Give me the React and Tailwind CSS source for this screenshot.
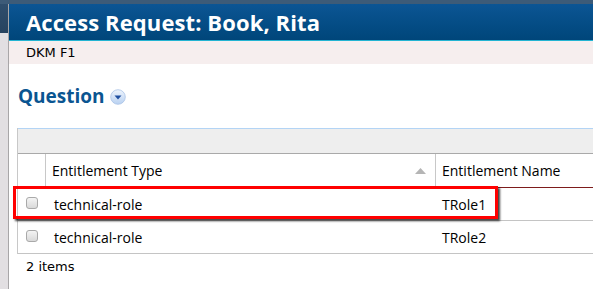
import React from "react";

function Checkbox() {
  return (
    <div className="h-[12px] w-[12px] rounded-[3px] border border-[#a9a9a9] bg-gradient-to-b from-[#f4f4f4] to-[#d9d9d9]" />
  );
}

export default function App() {
  const rows = [
    { type: "technical-role", name: "TRole1" },
    { type: "technical-role", name: "TRole2" },
  ];
  return (
    <div className="relative flex h-[289px] w-[593px] flex-col overflow-hidden bg-white">
      <div className="h-[4px] shrink-0 bg-[#3d5b78]" />
      <div className="flex flex-1">
        <div className="flex w-[9px] shrink-0 flex-col border-r border-[#a8a6a8]">
          <div className="h-[29px] bg-gradient-to-b from-[#2f4e6d] to-[#27435f]" />
          <div className="flex-1 bg-[#e2dfe2]" />
        </div>
        <div className="flex flex-1 flex-col">
          <div className="flex h-[36px] items-center bg-gradient-to-b from-[#0c5594] to-[#00467a] pl-[17px]">
            <span className="font-['Open_Sans',sans-serif] text-[22px] font-bold leading-none tracking-[0.1px] text-white">
              Access Request: Book, Rita
            </span>
          </div>
          <div className="h-[1px] bg-[#23b4d2]" />
          <div className="flex h-[23px] items-center bg-[#f6eeee] pl-[17px] font-['DejaVu_Sans',sans-serif] text-[13px] text-black">
            DKM F1
          </div>
          <div className="flex flex-1 flex-col pl-[8px]">
            <div className="flex h-[64px] items-start pt-[23px]">
              <div className="flex items-center gap-[6px] pl-[1px]">
                <span className="font-['Open_Sans',sans-serif] text-[19px] font-bold leading-none text-[#0a5591]">
                  Question
                </span>
                <svg width="16" height="16" viewBox="0 0 16 16" className="-ml-[1px]">
                  <defs>
                    <linearGradient id="qg" x1="0" y1="0" x2="0" y2="1">
                      <stop offset="0" stopColor="#eef4fc" />
                      <stop offset="1" stopColor="#b9d1f1" />
                    </linearGradient>
                  </defs>
                  <circle cx="8" cy="8" r="7.3" fill="url(#qg)" stroke="#a9c3e6" strokeWidth="0.8" />
                  <path d="M4.5 6.5 L11.5 6.5 L8 10.5 Z" fill="#1f4fa0" />
                </svg>
              </div>
            </div>
            <div className="flex flex-col border-l border-[#c8c8c8]">
              <div className="h-[26px] border-t border-[#b3d4f5] border-b border-b-[#a9a9a9] bg-[#eeeeee]" />
              <div className="flex h-[34px] border-b border-[#7d1c1c] font-['Open_Sans',sans-serif] text-[14px] text-black">
                <div className="w-[28px] shrink-0 border-r border-[#c8c8c8]" />
                <div className="flex w-[390px] shrink-0 items-center justify-between border-r border-[#c8c8c8] pl-[6px] pr-[9px]">
                  <span>Entitlement Type</span>
                  <svg width="11" height="6" viewBox="0 0 11 6">
                    <path d="M0 6 L5.5 0 L11 6 Z" fill="#b5b5b5" />
                  </svg>
                </div>
                <div className="flex flex-1 items-center pl-[6px]">
                  <span className="whitespace-nowrap">Entitlement Name</span>
                </div>
              </div>
              {rows.map((r, i) => (
                <div
                  key={i}
                  className="flex h-[33px] border-b border-[#c4c4c4] font-['Open_Sans',sans-serif] text-[14px] text-black"
                >
                  <div className="flex w-[28px] shrink-0 items-center justify-center pb-[3px]">
                    <Checkbox />
                  </div>
                  <div className="flex w-[390px] shrink-0 items-center pl-[8px]">{r.type}</div>
                  <div className="flex flex-1 items-center pl-[6px]">{r.name}</div>
                </div>
              ))}
            </div>
            <div className="pl-[9px] pt-[3px] font-['DejaVu_Sans',sans-serif] text-[13px] text-black">
              2 items
            </div>
          </div>
        </div>
      </div>
      <div className="absolute left-[13px] top-[186px] h-[33px] w-[485px] border-[3px] border-[#ff0000] shadow-[2px_2px_2px_rgba(0,0,0,0.75)]" />
    </div>
  );
}
